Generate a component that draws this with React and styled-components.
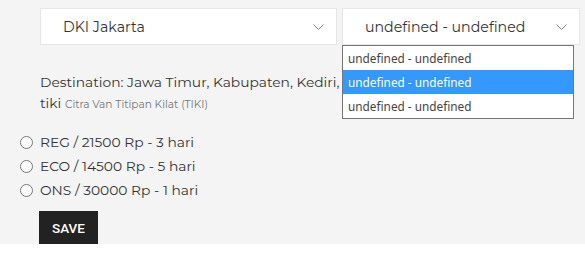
import styled, { createGlobalStyle } from 'styled-components'

const GlobalStyle = createGlobalStyle`
  body {
    margin: 0;
    background: #fff;
    font-family: Montserrat, "Open Sans", "Liberation Sans", sans-serif;
    color: #333;
  }
`

const Page = styled.div`
  background: #f4f4f4;
  padding: 8px 0 0 20px;
  height: 236px;
`

const SelectRow = styled.div`
  display: flex;
  gap: 5px;
  margin-left: 20px;
`

const SelectBox = styled.div`
  position: relative;
  box-sizing: border-box;
  width: ${p => p.$width}px;
  height: 37px;
  background: #fff;
  border: 1px solid #e6e6e6;
  display: flex;
  align-items: center;
  justify-content: space-between;
  padding: 0 12px 0 22px;
  font-size: 14.2px;
  color: #333;
`

const Chevron = () => (
  <svg width="11" height="6" viewBox="0 0 11 6">
    <polyline points="0.5,0.5 5.5,5.5 10.5,0.5" fill="none" stroke="#888" strokeWidth="1" />
  </svg>
)

const Menu = styled.ul`
  position: absolute;
  top: 36px;
  left: -1px;
  width: 232px;
  box-sizing: border-box;
  margin: 0;
  padding: 0;
  list-style: none;
  background: #fff;
  border: 1px solid #767676;
  z-index: 5;
`

const MenuItem = styled.li`
  height: 24px;
  line-height: 24px;
  padding-left: 5px;
  font-family: "Noto Sans", "Open Sans", sans-serif;
  font-size: 11.8px;
  color: ${p => (p.$active ? '#fff' : '#444')};
  background: ${p => (p.$active ? '#3399ff' : 'transparent')};
`

const Info = styled.div`
  margin: 27px 0 0 20px;
  font-size: 13.8px;
  line-height: 21px;
  color: #333;
`

const Courier = styled.span`
  font-size: 10.6px;
  color: #777;
`

const RadioList = styled.div`
  margin-top: 15px;
`

const RadioRow = styled.label`
  display: flex;
  align-items: center;
  gap: 7px;
  height: 24px;
  font-size: 13.8px;
  color: #333;

  input {
    margin: 0;
    width: 13px;
    height: 13px;
  }
`

const SaveButton = styled.button`
  margin: 9px 0 0 19px;
  width: 59px;
  height: 34px;
  border: none;
  background: #222;
  color: #fff;
  font-family: Roboto, "Liberation Sans", sans-serif;
  font-weight: 500;
  font-size: 13.5px;
  padding: 0;
`

const services = [
  { code: 'REG', cost: 21500, etd: 3 },
  { code: 'ECO', cost: 14500, etd: 5 },
  { code: 'ONS', cost: 30000, etd: 1 },
]

export default function App() {
  return (
    <>
      <GlobalStyle />
      <Page>
        <SelectRow>
          <SelectBox $width={297}>
            <span>DKI Jakarta</span>
            <Chevron />
          </SelectBox>
          <SelectBox $width={238}>
            <span>undefined - undefined</span>
            <Chevron />
            <Menu>
              <MenuItem>undefined - undefined</MenuItem>
              <MenuItem $active>undefined - undefined</MenuItem>
              <MenuItem>undefined - undefined</MenuItem>
            </Menu>
          </SelectBox>
        </SelectRow>
        <Info>
          <div>Destination: Jawa Timur, Kabupaten, Kediri, Kediri</div>
          <div>
            tiki <Courier>Citra Van Titipan Kilat (TIKI)</Courier>
          </div>
        </Info>
        <RadioList>
          {services.map(s => (
            <RadioRow key={s.code}>
              <input type="radio" name="service" />
              {s.code} / {s.cost} Rp - {s.etd} hari
            </RadioRow>
          ))}
        </RadioList>
        <SaveButton>SAVE</SaveButton>
      </Page>
    </>
  )
}
